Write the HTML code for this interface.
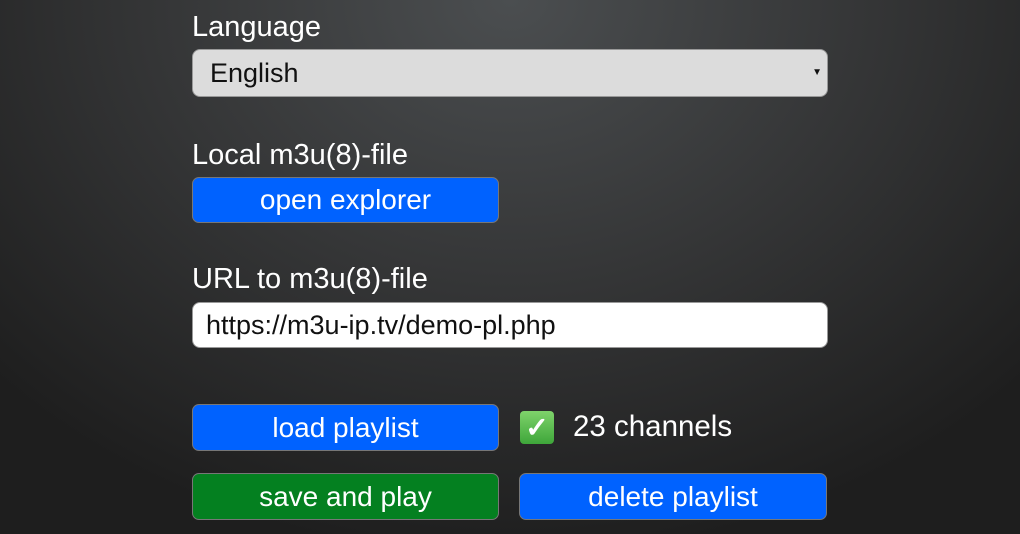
<!DOCTYPE html>
<html><head><style>
body{margin:0;width:1020px;height:534px;overflow:hidden;background:radial-gradient(ellipse 700px 560px at 510px 0px,#4b4e50 0%,#353637 50%,#1e1e1e 100%);font-family:"Liberation Sans",sans-serif;color:#fff;position:relative}
.a{position:absolute}
.lbl{font-size:29px;line-height:30px}
.btn{position:absolute;box-sizing:border-box;border:1px solid #777;border-radius:7px;color:#fff;font-size:28px;text-align:center;background:#0062ff}
</style></head><body>
<div class="a lbl" style="left:192px;top:12px">Language</div>
<div class="a" style="left:192px;top:49px;width:636px;height:48px;box-sizing:border-box;background:#dcdcdc;border:1px solid #999;border-radius:8px;color:#111;font-size:27px;line-height:46px;padding-left:17px">English<span style="position:absolute;right:5px;top:0;font-size:10px">▼</span></div>
<div class="a lbl" style="left:192px;top:140px">Local m3u(8)-file</div>
<div class="btn" style="left:192px;top:177px;width:307px;height:46px;line-height:44px">open explorer</div>
<div class="a lbl" style="left:192px;top:264px">URL to m3u(8)-file</div>
<div class="a" style="left:192px;top:302px;width:636px;height:46px;box-sizing:border-box;background:#fff;border:1px solid #999;border-radius:8px;color:#111;font-size:27px;line-height:44px;padding-left:13px">https://m3u-ip.tv/demo-pl.php</div>
<div class="btn" style="left:192px;top:404px;width:307px;height:47px;line-height:45px">load playlist</div>
<div class="a" style="left:520px;top:411px;width:34px;height:33px;background:linear-gradient(#7fd36b,#3ea63a);border-radius:4px;color:#fff;font-size:28px;line-height:33px;text-align:center;font-weight:bold">✓</div>
<div class="a" style="left:573px;top:411px;font-size:29.5px;line-height:32px">23 channels</div>
<div class="btn" style="left:192px;top:473px;width:307px;height:47px;line-height:45px;background:#048020">save and play</div>
<div class="btn" style="left:519px;top:473px;width:308px;height:47px;line-height:45px">delete playlist</div>
</body></html>
